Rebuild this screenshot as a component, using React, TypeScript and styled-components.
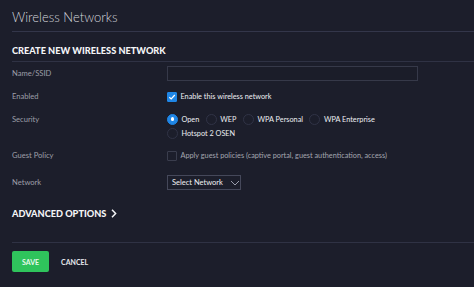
import React from "react";
import styled, { createGlobalStyle } from "styled-components";

const Global = createGlobalStyle`
  html, body { margin: 0; padding: 0; background: #1c1e2b; }
  body { font-family: Lato, "Open Sans", sans-serif; }
  * { box-sizing: border-box; }
`;

const Page = styled.div`
  width: 474px;
  height: 287px;
  background: #1c1e2b;
  padding-left: 12px;
  overflow: hidden;
`;

const Title = styled.h1`
  margin: 0;
  height: 32px;
  padding-top: 8px;
  font-size: 13px;
  font-weight: 300;
  color: #d4d6dc;
  line-height: 18px;
  border-bottom: 1.5px solid #33364a;
`;

const Section = styled.h2`
  margin: 0;
  height: 30px;
  padding-top: 12px;
  font-size: 9.2px;
  font-weight: 900;
  color: #f4f5f7;
  line-height: 14px;
  border-bottom: 1px solid #2f3244;
`;

const Form = styled.div`
  display: grid;
  grid-template-columns: 155px 1fr;
`;

const Label = styled.div<{ $h: number; $top?: number }>`
  height: ${(p) => p.$h}px;
  padding-top: ${(p) => p.$top ?? 0}px;
  font-size: 7.6px;
  color: #9c9ea8;
  line-height: ${(p) => (p.$top ? 14 : p.$h)}px;
  white-space: nowrap;
`;

const Control = styled.div<{ $h: number; $top?: number }>`
  height: ${(p) => p.$h}px;
  display: flex;
  flex-direction: column;
  justify-content: ${(p) => (p.$top ? "flex-start" : "center")};
  padding-top: ${(p) => p.$top ?? 0}px;
`;

const TextInput = styled.div`
  width: 251px;
  height: 15px;
  border: 1px solid #363949;
  background: #1b1d29;
`;

const Line = styled.div`
  display: flex;
  align-items: center;
  gap: 3.5px;
  height: 14px;
  white-space: nowrap;
`;

const Box = styled.span<{ $on?: boolean }>`
  width: 10px;
  height: 10px;
  border-radius: 1px;
  background: ${(p) => (p.$on ? "#1f86e6" : "transparent")};
  border: 1px solid ${(p) => (p.$on ? "#1f86e6" : "#3a3d4d")};
  display: flex;
  align-items: center;
  justify-content: center;
`;

const Radio = styled.span<{ $on?: boolean }>`
  width: 11px;
  height: 11px;
  border-radius: 50%;
  background: ${(p) => (p.$on ? "#1f86e6" : "transparent")};
  border: 1px solid ${(p) => (p.$on ? "#1f86e6" : "#303346")};
  display: flex;
  align-items: center;
  justify-content: center;
  &::after {
    content: "";
    display: ${(p) => (p.$on ? "block" : "none")};
    width: 3.5px;
    height: 3.5px;
    border-radius: 50%;
    background: #fff;
  }
`;

const Opt = styled.span<{ $muted?: boolean }>`
  font-size: 7.3px;
  color: ${(p) => (p.$muted ? "#a4a6b0" : "#eceef2")};
  margin-right: 3px;
`;

const Select = styled.div`
  width: 74px;
  height: 15px;
  border: 1px solid #45485a;
  display: flex;
  align-items: center;
  padding-left: 4px;
  gap: 7px;
  font-size: 7.5px;
  color: #f0f1f4;
  white-space: nowrap;
`;

const Advanced = styled.div`
  display: flex;
  align-items: center;
  gap: 5px;
  height: 14px;
  margin-top: 8px;
  font-size: 9.2px;
  font-weight: 900;
  color: #f4f5f7;
`;

const Footer = styled.div`
  margin-top: 22px;
  border-top: 1px solid #2f3244;
  padding-top: 8px;
  display: flex;
  align-items: center;
  gap: 12px;
`;

const Save = styled.button`
  width: 37px;
  height: 21px;
  background: #2fc45c;
  border: none;
  border-radius: 2px;
  color: #e8f8ec;
  font-family: inherit;
  font-size: 7px;
  font-weight: 700;
  padding: 0;
`;

const Cancel = styled.button`
  background: none;
  border: none;
  color: #e6e8ee;
  font-family: inherit;
  font-size: 7px;
  font-weight: 700;
  padding: 0;
`;

export default function App() {
  return (
    <>
      <Global />
      <Page>
        <Title>Wireless Networks</Title>
        <Section>CREATE NEW WIRELESS NETWORK</Section>
        <Form>
          <Label $h={23}>Name/SSID</Label>
          <Control $h={23}>
            <TextInput />
          </Control>

          <Label $h={23}>Enabled</Label>
          <Control $h={23}>
            <Line>
              <Box $on>
                <svg width="8" height="8" viewBox="0 0 8 8">
                  <path d="M1.3 4.2 L3.2 6 L6.8 2" stroke="#fff" strokeWidth="1.2" fill="none" />
                </svg>
              </Box>
              <Opt>Enable this wireless network</Opt>
            </Line>
          </Control>

          <Label $h={36} $top={4}>Security</Label>
          <Control $h={36} $top={4}>
            <Line>
              <Radio $on />
              <Opt>Open</Opt>
              <Radio />
              <Opt>WEP</Opt>
              <Radio />
              <Opt>WPA Personal</Opt>
              <Radio />
              <Opt>WPA Enterprise</Opt>
            </Line>
            <Line>
              <Radio />
              <Opt>Hotspot 2 OSEN</Opt>
            </Line>
          </Control>

          <Label $h={23}>Guest Policy</Label>
          <Control $h={23}>
            <Line>
              <Box />
              <Opt $muted>Apply guest policies (captive portal, guest authentication, access)</Opt>
            </Line>
          </Control>

          <Label $h={31}>Network</Label>
          <Control $h={31}>
            <Select>
              Select Network
              <svg width="10" height="6" viewBox="0 0 10 6">
                <path d="M1 1 L5 5 L9 1" stroke="#9a9dab" strokeWidth="1" fill="none" />
              </svg>
            </Select>
          </Control>
        </Form>
        <Advanced>
          ADVANCED OPTIONS
          <svg width="6" height="9" viewBox="0 0 6 9">
            <path d="M1 0.8 L4.6 4.5 L1 8.2" stroke="#f4f5f7" strokeWidth="1.5" fill="none" />
          </svg>
        </Advanced>
        <Footer>
          <Save>SAVE</Save>
          <Cancel>CANCEL</Cancel>
        </Footer>
      </Page>
    </>
  );
}
